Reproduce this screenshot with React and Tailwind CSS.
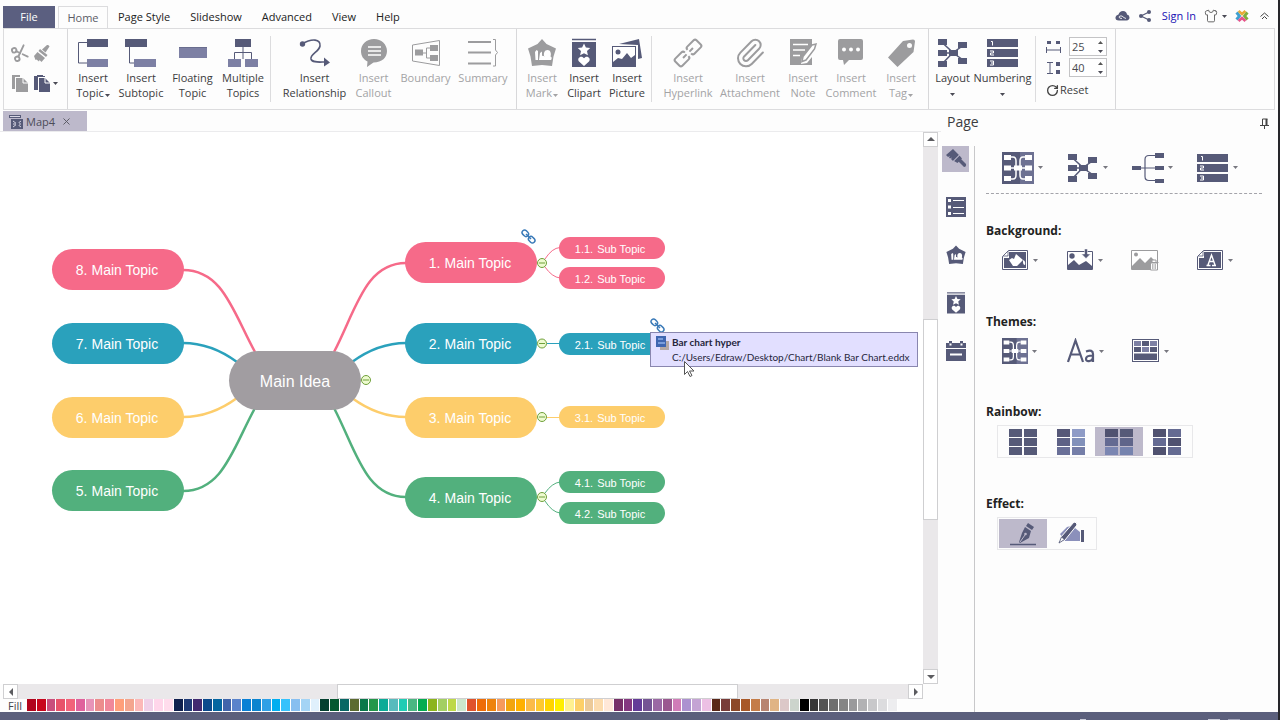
import React, { useState } from "react";
import { Scissors, Paperclip, RotateCw, Shirt, X } from "lucide-react";

const DARK = "#565a78";
const LIGHT = "#7d80a4";
const GRAY = "#9c9c9e";

const Icon = ({ w = 32, h = 32, children }) => (
  <svg width={w} height={h} viewBox={`0 0 ${w} ${h}`} fill="none" aria-hidden="true" className="shrink-0">
    {children}
  </svg>
);

const Caret = ({ color = "#4a4a55" }) => (
  <svg width="5" height="3" viewBox="0 0 5 3" aria-hidden="true" className="shrink-0">
    <path d="M0 0h5L2.5 3z" fill={color} />
  </svg>
);

/* ---------- ribbon icons ---------- */

const TopicIcon = () => (
  <Icon>
    <path d="M10 5.500H1.500V26H10" stroke={DARK} />
    <rect x="10" y="2" width="21" height="8" fill={DARK} />
    <rect x="10" y="22" width="21" height="8" fill={LIGHT} />
  </Icon>
);

const SubtopicIcon = () => (
  <Icon>
    <path d="M4.500 10V26H9" stroke={DARK} />
    <rect y="2" width="22" height="8" fill={DARK} />
    <rect x="9" y="22" width="22" height="8" fill={LIGHT} />
  </Icon>
);

const FloatingIcon = () => (
  <Icon>
    <rect x="2" y="10" width="28" height="11" fill={LIGHT} />
    <path d="M2 10.500h28" stroke={DARK} strokeOpacity=".5" />
  </Icon>
);

const MultipleIcon = () => (
  <Icon>
    <path d="M16 10v12M7.500 22v-6.500h17V22" stroke={DARK} />
    <rect x="8" y="2" width="16" height="8" fill={DARK} />
    <rect x="1" y="22" width="13" height="8" fill={LIGHT} />
    <rect x="18" y="22" width="13" height="8" fill={LIGHT} />
  </Icon>
);

const RelationshipIcon = () => (
  <Icon>
    <path d="M3 7C13 1 22 2 21 9c-1 6-10 8-9 13 1 4 8 3 15 3" stroke={DARK} strokeWidth="1.600" />
    <circle cx="3.500" cy="7" r="2.700" fill={DARK} />
    <path d="M25 20.500l6 5-6 4z" fill={DARK} />
  </Icon>
);

const CalloutIcon = () => (
  <Icon>
    <path d="M16 2C8.500 2 3 7 3 14c0 5 2.500 8.500 6.500 10.500L9 30l6.500-4.500C24 25.500 29 20.500 29 14S23.500 2 16 2z" fill={GRAY} />
    <path d="M10 10h13M10 14h13M10 18h13" stroke="#fff" strokeWidth="1.500" />
  </Icon>
);

const BoundaryIcon = () => (
  <Icon>
    <path d="M2.500 8L29.500 3.500v25L2.500 24z" stroke={GRAY} />
    <path d="M13 16h4M20 11h-3.500v10H20" stroke={GRAY} />
    <rect x="5" y="12.500" width="8" height="6" fill={GRAY} />
    <rect x="20" y="8" width="8" height="6" fill={GRAY} />
    <rect x="20" y="18" width="8" height="6" fill={GRAY} />
  </Icon>
);

const SummaryIcon = () => (
  <Icon>
    <path d="M1 5h23M1 15.500h23M1 26.500h23" stroke={GRAY} strokeWidth="2" />
    <path d="M26 2.500h2.500v10.500l2 2.500-2 2.500v11H26" stroke={GRAY} />
  </Icon>
);

const MarkIcon = ({ size = 32, color = GRAY }) => (
  <svg width={size} height={size} viewBox="0 0 32 32" aria-hidden="true">
    <path d="M16 2l4.500 5L30 11.500l-2.500 8L26 29l-10-1-10 1-1.500-9.500L2 11.500 11.500 7z" fill={color} />
    <path d="M9 15l1.500-2 1.500 1v9H9.500zM13 23l1-7 2-1.500v4.500c1-.5 2 0 2.500 1-1.500-3.500 0-7 3-7s4 3.500 3 6.500c1.500.5 1.500 2.500.5 3.500z" fill="#fff" />
  </svg>
);

const ClipartIcon = ({ w = 32, h = 32 }) => (
  <svg width={w} height={h} viewBox="0 0 32 32" aria-hidden="true">
    <path d="M4 2.500h24" stroke={DARK} strokeWidth="1.500" />
    <rect x="4" y="5" width="24" height="25" fill={DARK} />
    <path d="M16 6.500l1.900 4 4.300.500-3.200 3 .900 4.300L16 16.200l-3.900 2.100.900-4.300-3.200-3 4.300-.5z" fill="#fff" />
    <path d="M16 29l-5-4.500c-2-2.500.5-5.500 3.500-4.500l1.500 1.200 1.500-1.200c3-1 5.500 2 3.500 4.500z" fill="#fff" />
  </svg>
);

const PictureIcon = () => (
  <Icon>
    <path d="M8 7L28 2l3 19-4 1V8z" fill={DARK} />
    <rect x="1.500" y="9.500" width="23" height="20" fill="#fff" stroke={DARK} />
    <circle cx="7" cy="15" r="2.500" fill={DARK} />
    <path d="M2 25l5-4 4 1 5-6 4 5 4-3v11H2z" fill={DARK} />
  </Icon>
);

const HyperlinkIcon = () => (
  <Icon>
    <g transform="rotate(-45 16 16)" stroke={GRAY} strokeWidth="2">
      <path d="M14 13.500V13q0-2-2-2H3q-2 0-2 2v6q0 2 2 2h9q2 0 2-2v-.5" />
      <path d="M18 13.500V13q0-2 2-2h9q2 0 2 2v6q0 2-2 2h-9q-2 0-2-2v-.5" />
      <path d="M9 16h5M18 16h5" />
    </g>
  </Icon>
);

const NoteIcon = () => (
  <Icon>
    <path d="M3 2h22v8L15 21l-1 6 6-1 5-6v8H3z" fill={GRAY} />
    <path d="M6 7.500h15M6 13h12M6 18.500h7" stroke="#fff" strokeWidth="1.500" />
    <path d="M25 8l4-1-1.500 5L19 23l-4 1.500 1-5z" fill="#fff" stroke={GRAY} strokeWidth="1.500" />
  </Icon>
);

const CommentIcon = () => (
  <Icon>
    <path d="M5 2h21q2 0 2 2v17q0 2-2 2H14l-5 5-1-5H5q-2 0-2-2V4q0-2 2-2z" fill={GRAY} />
    <circle cx="9" cy="12.500" r="2" fill="#fff" />
    <circle cx="16" cy="12.500" r="2" fill="#fff" />
    <circle cx="23" cy="12.500" r="2" fill="#fff" />
  </Icon>
);

const TagIcon = () => (
  <Icon>
    <path fillRule="evenodd" d="M18 4l10-1.500q2 0 2 2L28.500 15 12.500 30 3 20.500zM24.500 6a2.500 2.500 0 100 5 2.500 2.500 0 000-5z" fill={GRAY} />
  </Icon>
);

const LayoutIcon = () => (
  <Icon>
    <path d="M5 5.500l11 10L27 8M5 16h11l11 7.500M16 15.500L5 27" stroke={DARK} strokeWidth="1.500" />
    <rect x="1" y="2" width="9" height="6" fill={DARK} />
    <rect x="1" y="13" width="9" height="6" fill={DARK} />
    <rect x="1" y="24" width="9" height="6" fill={DARK} />
    <rect x="12" y="13" width="9" height="6" fill={DARK} />
    <rect x="21" y="5" width="9" height="6" fill={DARK} />
    <rect x="21" y="21" width="9" height="6" fill={DARK} />
  </Icon>
);

const NumberingIcon = () => (
  <Icon>
    <rect y="2" width="31" height="8" fill={DARK} />
    <rect y="12" width="31" height="8" fill={DARK} />
    <rect y="22" width="31" height="8" fill={DARK} />
    <path d="M4 4.500h1.500v4" stroke="#fff" />
    <path d="M3 14h3.500v2H3.500v2H7" stroke="#fff" />
    <path d="M3 24h3.500v4H3M4 26h2" stroke="#fff" />
  </Icon>
);

const BrushIcon = () => (
  <Icon w={18} h={18}>
    <path d="M14 1q2-.5 2.500 1.500L12.500 8.500 9 5.500z" fill={GRAY} />
    <path d="M7 5l7.500 6-1.500 2-7.500-6z" fill={GRAY} />
    <path d="M4.500 8l7.500 6-3.500 4-2-2-.5 1.500-2.500-2-1 .500L1 12z" fill={GRAY} />
  </Icon>
);

const CopyIcon = () => (
  <Icon w={18} h={18}>
    <path d="M1 1h8v2H4v12H1z" fill={GRAY} />
    <path d="M5 4h7l5 5v9H5z" fill={GRAY} />
    <path d="M12 4v5h5" stroke="#fff" />
  </Icon>
);

const PasteIcon = () => (
  <Icon w={18} h={18}>
    <path d="M1 2h3V1h6v1h2v1H5v13H1z" fill={DARK} />
    <path d="M6 4h6l5 5v9H6z" fill={DARK} />
    <path d="M12 4v5h5M5.500 4v13" stroke="#fff" />
  </Icon>
);

/* ---------- page panel icons ---------- */

const MapIcon = ({ size = 32 }) => (
  <svg width={size} height={size} viewBox="0 0 32 32" fill="none" aria-hidden="true" className="shrink-0">
    <rect width="32" height="32" fill={DARK} />
    <path d="M32 0v32H18V0z" fill={LIGHT} fillOpacity=".6" />
    <path d="M9 5h2q3 0 3 4v14q0 4-3 4H9M23 5h-2q-3 0-3 4v14q0 4 3 4h2M9 16h14" stroke="#fff" strokeWidth="1.500" />
    <path d="M2 3h7v5H2zM2 13.500h7v5H2zM2 24h7v5H2zM23 3h7v5h-7zM23 13.500h7v5h-7zM23 24h7v5h-7zM12 13.500h8v5h-8z" fill="#fff" />
  </svg>
);

const TreeIcon = () => (
  <Icon>
    <path d="M8 16h16M24 3.500h-7q-4 0-4 4v17q0 4 4 4h7" stroke={DARK} strokeWidth="1.200" />
    <path d="M0 14h9v4H0zM23 1h9v5h-9zM23 14h9v4h-9zM23 27h9v4h-9z" fill={DARK} />
  </Icon>
);

const BackFillIcon = () => (
  <Icon w={28} h={22}>
    <path d="M7.500 1.500h19v19h-25v-13z" fill="#fff" stroke={DARK} />
    <path d="M8 3h17v16H3V9h5z" fill={DARK} />
    <path d="M2 7l5-5v5z" fill="#fff" stroke={DARK} strokeWidth=".800" />
    <path d="M15 5l7 6-6 6h-4l-4-6 3-2 2 1z" fill="#fff" />
    <path d="M22 11q3 1 2 5-2 0-2-3z" fill="#fff" />
  </Icon>
);

const BackPictureIcon = () => (
  <Icon w={28} h={22}>
    <path d="M1.500 2.500h25v18h-25z" fill="#fff" stroke={DARK} />
    <circle cx="6" cy="7" r="2.700" fill={DARK} />
    <path d="M2 16l6-5 5 5 7-4 6 5v3H2z" fill={DARK} />
    <path d="M18.500 0h3v5h3L20 9.500 15.500 5h3z" fill={DARK} stroke="#fff" strokeWidth=".500" />
  </Icon>
);

const BackRemoveIcon = () => (
  <Icon w={28} h={22}>
    <path d="M.500 1.500h26v19H.500z" fill="#fff" stroke={GRAY} />
    <circle cx="5" cy="5.500" r="2" fill={GRAY} />
    <path d="M1 17l8-8 5 5 6-6 6 6v6H1z" fill={GRAY} />
    <path d="M18.500 13.500h9M21 13v-2h4v2M19.500 14v7h7v-7z" fill="#fff" stroke={GRAY} />
    <path d="M21.500 15v5M23 15v5M24.500 15v5" stroke={GRAY} strokeWidth=".700" />
  </Icon>
);

const WatermarkIcon = () => (
  <Icon w={28} h={22}>
    <path d="M7.500 1.500h19v19h-25v-13z" fill="#fff" stroke={DARK} />
    <path d="M8 3h17v16H3V9h5z" fill={DARK} />
    <path d="M2 7l5-5v5z" fill="#fff" stroke={DARK} strokeWidth=".800" />
    <path d="M10.500 16.500h4M16 16.500h4M12 16l3.500-10L19 16M13.500 12.500h4" stroke="#fff" strokeWidth="1.400" />
  </Icon>
);

const FontIcon = () => (
  <Icon w={28} h={26}>
    <path d="M1 24L8.500 2.500 16 24M4 16.500h9" stroke={DARK} strokeWidth="2.200" />
    <path d="M19 13.500q7-2.500 7 2.500v8M26 17.500q-7 0-7 3.300 0 2.700 3 2.300 4-.5 4-4.600" stroke={DARK} strokeWidth="2.200" />
  </Icon>
);

const ThemeColorIcon = () => (
  <Icon w={28} h={26}>
    <rect x=".500" y="1.500" width="26" height="22" fill="#fff" stroke={DARK} />
    <path d="M2 3h7v5H2zM18 3h7v5h-7zM10 9h7v5h-7z" fill={LIGHT} />
    <path d="M10 3h7v5h-7zM2 9h7v5H2zM18 9h7v5h-7zM2 15.500h23V22H2z" fill={DARK} />
  </Icon>
);

const BlocksIcon = ({ fills }) => (
  <Icon w={30} h={28}>
    {fills.map((fill, i) => (
      <rect key={i} x={i % 2 ? 16 : 1} y={1 + Math.floor(i / 2) * 9} width="13" height="8" fill={fill} />
    ))}
  </Icon>
);

const PenIcon = () => (
  <Icon w={30} h={26}>
    <path d="M2 23.500h26" stroke={DARK} strokeWidth="1.500" />
    <path d="M20 2l6 4-2 3-6-4zM17 6l6 4-2 7-9 5-1-1 3-9z" fill={DARK} />
    <path d="M12 21l5-7" stroke="#bdb9cb" />
    <circle cx="17.500" cy="13" r="1.300" fill="#bdb9cb" />
  </Icon>
);

const HandPenIcon = () => (
  <Icon w={30} h={26}>
    <path d="M4 13L11 6q5-2 8 1l5 4v9H9z" fill="#8b90bb" />
    <path d="M25 9h3v12h-3z" fill={DARK} />
    <path d="M18 1q3 0 3 3L9 19l-7 4 3-7z" fill={DARK} stroke="#fff" />
    <path d="M5.500 16l3 2.500-5.500 3.500z" fill="#fff" stroke={DARK} strokeWidth=".800" />
  </Icon>
);

const PaintIcon = () => (
  <Icon w={22} h={22}>
    <path d="M8 1l6 6-6 6-2-2 1-1.500L5 10.500 4 9.500 5 8 3 9 1 7z" fill={DARK} />
    <path d="M14.500 7.500l2.500 3-4.500 4.500-3.500-2z" fill={DARK} />
    <path d="M15 10l6 6q.5 3-2 3l-6-6z" fill={DARK} />
    <path d="M14.500 7L8.500 13" stroke="#bdb9cb" strokeWidth=".800" />
  </Icon>
);

const ListIcon = () => (
  <Icon w={20} h={20}>
    <rect width="20" height="20" fill={DARK} />
    <path d="M2 2h3v3H2zM2 8.500h3v3H2zM2 15h3v3H2z" fill="#fff" />
    <path d="M7 3.500h11M7 10.500h11M7 16.500h11" stroke="#fff" />
  </Icon>
);

const CalendarIcon = () => (
  <Icon w={20} h={22}>
    <path d="M0 3h3V1h3v2h8V1h3v2h3v5H0zM0 9h20v12H0z" fill={DARK} />
    <path d="M3.500 4.500h2M14.500 4.500h2M4 14.500h12" stroke="#fff" strokeWidth="2" />
  </Icon>
);

/* ---------- ribbon ---------- */

function RibbonButton({ width, icon, lines, disabled, caret, caretBelow }) {
  return (
    <button
      type="button"
      disabled={disabled}
      className={`flex shrink-0 flex-col items-center pt-2 text-[11px] leading-[15px] ${width} ${
        disabled ? "text-[#a3a3a5]" : "text-[#3c3c40]"
      }`}
    >
      {icon}
      <span className="mt-px whitespace-nowrap">{lines[0]}</span>
      {lines[1] && (
        <span className="flex items-center gap-px whitespace-nowrap">
          {lines[1]}
          {caret && <span className="pt-1.5"><Caret color={disabled ? "#a3a3a5" : "#4a4a55"} /></span>}
        </span>
      )}
      {caretBelow && <span className="pt-2"><Caret /></span>}
    </button>
  );
}

const ShortRule = () => <div className="my-[7px] w-px shrink-0 bg-[#dcdcde]" />;
const LongRule = () => <div className="w-px shrink-0 bg-[#d8d8da]" />;

function Spinner({ label, icon, initial }) {
  const [value, setValue] = useState(initial);
  return (
    <label className="flex items-center gap-2">
      {icon}
      <span className="flex h-[19px] w-[38px] items-center border border-[#c4c4c6] bg-white">
        <input
          aria-label={label}
          value={value}
          onChange={(e) => setValue(Number(e.target.value) || 0)}
          className="w-6 min-w-0 pl-0.5 text-[11px] leading-4 text-[#4a4a50] outline-none"
        />
        <span className="flex flex-1 flex-col items-center gap-1.5">
          <button type="button" aria-label={`Increase ${label}`} onClick={() => setValue(value + 1)}>
            <svg width="5" height="3" viewBox="0 0 5 3"><path d="M0 3h5L2.500 0z" fill="#555" /></svg>
          </button>
          <button type="button" aria-label={`Decrease ${label}`} onClick={() => setValue(value - 1)}>
            <Caret />
          </button>
        </span>
      </span>
    </label>
  );
}

function Ribbon() {
  return (
    <div className="mr-[3px] ml-[3px] flex h-[82px] shrink-0 overflow-hidden border border-[#dcdcde]">
      <div className="grid w-[63px] shrink-0 grid-cols-[26px_30px] content-start gap-y-3 pt-[15px] pl-[7px]">
        <button type="button" aria-label="Cut"><Scissors size={18} color={GRAY} strokeWidth={2.500} className="-rotate-20" /></button>
        <button type="button" aria-label="Format painter" className="-ml-1"><BrushIcon /></button>
        <button type="button" aria-label="Copy"><CopyIcon /></button>
        <button type="button" aria-label="Paste" className="-ml-1 flex items-center gap-0.5"><PasteIcon /><Caret /></button>
      </div>
      <LongRule />
      <div className="flex shrink-0 pr-1 pl-px">
        <RibbonButton width="w-[48px]" icon={<TopicIcon />} lines={["Insert", "Topic"]} caret />
        <RibbonButton width="w-[48px]" icon={<SubtopicIcon />} lines={["Insert", "Subtopic"]} />
        <RibbonButton width="w-[55px]" icon={<FloatingIcon />} lines={["Floating", "Topic"]} />
        <RibbonButton width="w-[46px]" icon={<MultipleIcon />} lines={["Multiple", "Topics"]} />
      </div>
      <ShortRule />
      <div className="flex shrink-0 pr-1 pl-2">
        <RibbonButton width="w-[71px]" icon={<RelationshipIcon />} lines={["Insert", "Relationship"]} />
        <RibbonButton width="w-[47px]" icon={<CalloutIcon />} lines={["Insert", "Callout"]} disabled />
        <RibbonButton width="w-[57px]" icon={<BoundaryIcon />} lines={["Boundary"]} disabled />
        <RibbonButton width="w-[58px]" icon={<SummaryIcon />} lines={["Summary"]} disabled />
      </div>
      <LongRule />
      <div className="flex shrink-0 pr-px pl-[3px]">
        <RibbonButton width="w-[44px]" icon={<MarkIcon />} lines={["Insert", "Mark"]} disabled caret />
        <RibbonButton width="w-[40px]" icon={<ClipartIcon />} lines={["Insert", "Clipart"]} />
        <RibbonButton width="w-[46px]" icon={<PictureIcon />} lines={["Insert", "Picture"]} />
      </div>
      <ShortRule />
      <div className="flex shrink-0 pr-1 pl-1.5">
        <RibbonButton width="w-[60px]" icon={<HyperlinkIcon />} lines={["Insert", "Hyperlink"]} disabled />
        <RibbonButton
          width="w-[64px]"
          icon={<Paperclip size={32} color={GRAY} strokeWidth={1.500} />}
          lines={["Insert", "Attachment"]}
          disabled
        />
        <RibbonButton width="w-[42px]" icon={<NoteIcon />} lines={["Insert", "Note"]} disabled />
        <RibbonButton width="w-[54px]" icon={<CommentIcon />} lines={["Insert", "Comment"]} disabled />
        <RibbonButton width="w-[46px]" icon={<TagIcon />} lines={["Insert", "Tag"]} disabled caret />
      </div>
      <LongRule />
      <div className="flex shrink-0 pr-1 pl-0.5">
        <RibbonButton width="w-[43px]" icon={<LayoutIcon />} lines={["Layout"]} caretBelow />
        <RibbonButton width="w-[57px]" icon={<NumberingIcon />} lines={["Numbering"]} caretBelow />
      </div>
      <ShortRule />
      <div className="flex shrink-0 flex-col items-start gap-0.5 pt-2 pr-2 pl-2.5">
        <Spinner
          label="Horizontal spacing"
          initial={25}
          icon={
            <Icon w={15} h={14}>
              <path d="M1 1h4v3H1zM10 1h4v3h-4z" fill={DARK} />
              <path d="M.500 7v6M14.500 7v6M1 10h13" stroke={DARK} />
            </Icon>
          }
        />
        <Spinner
          label="Vertical spacing"
          initial={40}
          icon={
            <Icon w={15} h={14}>
              <path d="M1 1.500h6M1 12.500h6M4 2v10" stroke={DARK} />
              <path d="M10 1h4v4h-4zM10 9h4v4h-4z" fill={DARK} />
            </Icon>
          }
        />
        <button type="button" className="flex items-center gap-px pt-0.5 text-[11px] leading-[18px] text-[#3c3c40]">
          <RotateCw size={13} strokeWidth={2.500} color="#444" />
          Reset
        </button>
      </div>
      <LongRule />
    </div>
  );
}

function MenuBar() {
  return (
    <div className="flex h-[28px] shrink-0 items-end pr-[9px] pl-[3px] text-[11px] leading-4 text-[#222]">
      <button type="button" className="h-[22px] w-[52px] bg-[#5b5f80] text-white">File</button>
      <button type="button" className="ml-[3px] h-[22px] w-[50px] border border-b-0 border-[#dcdcde] text-[#5b5b66]">
        Home
      </button>
      <div className="flex h-[22px] items-center gap-5 pl-[10px]">
        {["Page Style", "Slideshow", "Advanced", "View", "Help"].map((name) => (
          <button key={name} type="button">{name}</button>
        ))}
      </div>
      <div className="ml-auto flex h-[24px] items-center">
        <button type="button" aria-label="Cloud">
          <Icon w={15} h={12}>
            <path d="M4 10.500Q0 10.500.500 7q.5-2 3-2.500Q4.500 1 8 1q3.500 0 4 3.500 2.500.5 2.500 3t-3 3z" fill={DARK} />
            <path d="M7 8.500q-3 0-3-1.500t3-1q2 2 4 2.500" stroke="#e4e4ea" />
          </Icon>
        </button>
        <button type="button" aria-label="Share" className="ml-[9px]">
          <Icon w={12} h={12}>
            <path d="M10 2L2 6l8 4" stroke={DARK} strokeWidth="1.200" />
            <circle cx="10" cy="2" r="2" fill={DARK} />
            <circle cx="2" cy="6" r="2" fill={DARK} />
            <circle cx="10" cy="10" r="2" fill={DARK} />
          </Icon>
        </button>
        <a href="#sign-in" className="ml-[11px] text-[#1a12b4]">Sign In</a>
        <button type="button" aria-label="Skin" className="ml-2 flex items-center gap-1">
          <Shirt size={14} strokeWidth={1.500} color="#555" />
          <Caret />
        </button>
        <button type="button" aria-label="Apps" className="ml-2">
          <Icon w={14} h={14}>
            <path d="M3.500 2L7 5l3.500-3" stroke="#e8ac38" strokeWidth="2.800" />
            <path d="M1.500 3.500L4.500 7l-3 3.500" stroke="#3f9fd0" strokeWidth="2.800" />
            <path d="M12.500 3.500L9.500 7l3 3.500" stroke="#7fae3c" strokeWidth="2.800" />
            <path d="M3.500 12L7 9l3.500 3" stroke="#e6558c" strokeWidth="2.800" />
          </Icon>
        </button>
        <button type="button" aria-label="Collapse ribbon" className="ml-[11px]">
          <Icon w={9} h={8}>
            <path d="M.500 4.500l4-3.500 4 3.500M2 7l2.500-2.500L7 7" stroke="#444" />
          </Icon>
        </button>
      </div>
    </div>
  );
}

/* ---------- mind map ---------- */

const PINK = "#f66a89";
const TEAL = "#2aa1bc";
const AMBER = "#fdcd6b";
const GREEN = "#52b07d";

// coordinates are on the drawing canvas
const mainTopics = [
  { n: "8.", x: 52, y: 117, color: PINK },
  { n: "7.", x: 52, y: 191, color: TEAL },
  { n: "6.", x: 52, y: 265, color: AMBER },
  { n: "5.", x: 52, y: 338, color: GREEN },
  { n: "1.", x: 405, y: 110, color: PINK },
  { n: "2.", x: 405, y: 191, color: TEAL },
  { n: "3.", x: 405, y: 265, color: AMBER },
  { n: "4.", x: 405, y: 345, color: GREEN },
];

const subTopics = [
  { n: "1.1.", y: 105, color: PINK },
  { n: "1.2.", y: 135, color: PINK },
  { n: "2.1.", y: 201, color: TEAL },
  { n: "3.1.", y: 274, color: AMBER },
  { n: "4.1.", y: 339, color: GREEN },
  { n: "4.2.", y: 370, color: GREEN },
];

const branches = [
  { d: "M334 220C356 178 365 131 406 131", color: PINK },
  { d: "M255 220C233 180 223 138 183 138", color: PINK },
  { d: "M352 230Q378 211 406 211", color: TEAL },
  { d: "M237 230Q211 211 183 211", color: TEAL },
  { d: "M352 266Q378 285 406 285", color: AMBER },
  { d: "M237 266Q211 285 183 285", color: AMBER },
  { d: "M334 276C356 318 365 365 406 365", color: GREEN },
  { d: "M255 276C233 316 223 359 183 359", color: GREEN },
];

const twigs = [
  { d: "M545 127Q552 116 560 115.500M545 135Q552 145 560 146", color: PINK },
  { d: "M547 211.500H560", color: TEAL },
  { d: "M547 285.500H560", color: AMBER },
  { d: "M545 361Q552 351 560 350M545 369Q552 380 560 381", color: GREEN },
];

const toggles = [
  [542, 131],
  [542, 211.5],
  [542, 285],
  [542, 365],
  [366, 248],
];

const LinkBadge = ({ x, y }) => (
  <a href="#link" aria-label="Hyperlink" className="absolute" style={{ left: x, top: y }}>
    <Icon w={15} h={15}>
      <g transform="rotate(45 7.500 7.500)" stroke="#3a7ab8" strokeWidth="1.500">
        <rect x="-.500" y="5" width="7" height="5" rx="2.500" />
        <rect x="8.500" y="5" width="7" height="5" rx="2.500" />
        <path d="M4 7.500h7" />
      </g>
    </Icon>
  </a>
);

function MindMap() {
  return (
    <div className="relative min-w-0 flex-1 overflow-hidden bg-white [font-family:'Liberation_Sans',Arial,sans-serif] text-white">
      <svg className="absolute inset-0 h-full w-full" fill="none" aria-hidden="true">
        {branches.map((b) => (
          <path key={b.d} d={b.d} stroke={b.color} strokeWidth="2.500" />
        ))}
        {twigs.map((t) => (
          <path key={t.d} d={t.d} stroke={t.color} />
        ))}
        {toggles.map(([x, y]) => (
          <g key={`${x}-${y}`} stroke="#6fa03a">
            <circle cx={x} cy={y} r="4.500" fill="#eefbd0" />
            <path d={`M${x - 3} ${y}h6`} />
          </g>
        ))}
      </svg>

      <div className="absolute top-[219px] left-[229px] flex h-[59px] w-[132px] items-center justify-center rounded-full bg-[#a19da1] pt-0.5 text-[16px]">
        Main Idea
      </div>
      {mainTopics.map((t) => (
        <div
          key={t.n}
          className="absolute flex h-[41px] w-[132px] items-center justify-center gap-1 rounded-full pt-px pr-0.5 text-[14px] leading-5"
          style={{ left: t.x, top: t.y, backgroundColor: t.color }}
        >
          <span>{t.n}</span>
          <span>Main Topic</span>
        </div>
      ))}
      {subTopics.map((t) => (
        <div
          key={t.n}
          className="absolute left-[559px] flex h-[22px] w-[106px] items-center justify-center gap-1 rounded-full pt-px pr-1 text-[11px] leading-4"
          style={{ top: t.y, backgroundColor: t.color }}
        >
          <span>{t.n}</span>
          <span>Sub Topic</span>
        </div>
      ))}

      <LinkBadge x={521} y={97} />
      <LinkBadge x={650} y={186} />

      <div
        role="tooltip"
        className="absolute top-[200px] left-[650px] flex h-[35px] w-[268px] gap-0.5 border border-[#8986ae] bg-[#e2dfff] pt-0.5 pl-1 [font-family:Lato,sans-serif] text-[10px] leading-[15px] text-[#26263c]"
      >
        <div className="pt-px">
          <Icon w={15} h={15}>
            <path d="M5 5h9v9H5z" fill="#b5a9a4" />
            <path d="M1 0h10v11H1z" fill="#3f66b0" />
            <path d="M3 3h5M3 7h7" stroke="#8fb0e8" strokeWidth="1.500" />
          </Icon>
        </div>
        <div className="whitespace-nowrap">
          <p className="font-bold">Bar chart hyper</p>
          <p>C:/Users/Edraw/Desktop/Chart/Blank Bar Chart.eddx</p>
        </div>
      </div>

      {/* mouse pointer */}
      <svg width="11" height="17" viewBox="0 0 11 17" className="absolute top-[229px] left-[684px]" aria-hidden="true">
        <path d="M.500.500v13l3-3 2.500 5 2-1-2.500-4.500H10z" fill="#fff" stroke="#555" />
      </svg>
    </div>
  );
}

const arrows = {
  up: "M1 6h8L5 2z",
  down: "M1 3h8L5 7z",
  left: "M7 1v8L3 5z",
  right: "M3 1v8l4-4z",
};

const ScrollButton = ({ dir }) => (
  <button
    type="button"
    aria-label={`Scroll ${dir}`}
    className="flex size-[15px] shrink-0 items-center justify-center border border-[#cfcfd1] bg-white"
  >
    <svg width="10" height="10" viewBox="0 0 10 10"><path d={arrows[dir]} fill="#5c5c60" /></svg>
  </button>
);

/* ---------- colour strip ---------- */

const swatches = [
  "bg-[#b1051d]", "bg-[#c8071d]", "bg-[#c94f7c]", "bg-[#e8536a]", "bg-[#f2637a]", "bg-[#e0629c]", "bg-[#e794b8]", "bg-[#ec8d8d]",
  "bg-[#f0889a]", "bg-[#ff9f7a]", "bg-[#f4a58e]", "bg-[#fcb8b8]", "bg-[#f0d0e8]", "bg-[#ffd6ea]", "bg-[#ffdcec]",
  "bg-[#10204d]", "bg-[#1f3a75]", "bg-[#422a70]", "bg-[#0b4a8c]", "bg-[#0466a0]", "bg-[#4165ab]", "bg-[#5a83cb]", "bg-[#0a80d5]",
  "bg-[#0c84cf]", "bg-[#2fa0e6]", "bg-[#00aef0]", "bg-[#35c2fc]", "bg-[#87bff0]", "bg-[#a4d4f5]", "bg-[#e0f0fc]",
  "bg-[#044030]", "bg-[#04582f]", "bg-[#086764]", "bg-[#5b6b30]", "bg-[#08784a]", "bg-[#23974a]", "bg-[#0bab97]", "bg-[#58bbbd]",
  "bg-[#20ccb4]", "bg-[#4ab782]", "bg-[#04ac50]", "bg-[#8cb41c]", "bg-[#a3cf62]", "bg-[#bdd848]", "bg-[#cce6cc]",
  "bg-[#e0522c]", "bg-[#ee6c08]", "bg-[#ee820c]", "bg-[#f69a5c]", "bg-[#f2a50e]", "bg-[#ffb000]", "bg-[#fbbb48]", "bg-[#fdc830]",
  "bg-[#ffd400]", "bg-[#ffee00]", "bg-[#fff090]", "bg-[#fdd068]", "bg-[#ecca98]", "bg-[#fcdcae]", "bg-[#ffe8d8]",
  "bg-[#763068]", "bg-[#843880]", "bg-[#643c98]", "bg-[#745494]", "bg-[#9a68a4]", "bg-[#9a5890]", "bg-[#d07cb8]", "bg-[#ac92d0]",
  "bg-[#c4a4d4]", "bg-[#ecc0e4]",
  "bg-[#5a2818]", "bg-[#783c38]", "bg-[#8c4828]", "bg-[#a85828]", "bg-[#c47c48]", "bg-[#b88470]", "bg-[#e0b484]", "bg-[#dcc8c8]",
  "bg-[#ccd4cc]",
  "bg-[#000000]", "bg-[#363636]", "bg-[#545454]", "bg-[#6e6e6e]", "bg-[#858585]", "bg-[#9a9a9c]", "bg-[#b2b2b4]", "bg-[#c8c8ca]",
  "bg-[#dcdcde]", "bg-[#ededef]",
];

/* ---------- page panel ---------- */

const WithCaret = ({ label, children, caret = true }) => (
  <button type="button" aria-label={label} className="flex w-[65px] shrink-0 items-center gap-1">
    {children}
    {caret && <Caret color="#77777f" />}
  </button>
);

const rainbows = [
  [DARK, DARK, DARK, DARK, DARK, DARK],
  ["#565878", "#8e9bc6", "#5e6286", "#8291ba", "#6a7098", "#757ea8"],
  ["#505270", "#565a78", "#646a92", "#5f658a", "#7b86b2", "#7683ae"],
  ["#505270", "#656b92", "#646a92", "#505270", "#505270", "#656b92"],
];

function PagePanel() {
  const [rainbow, setRainbow] = useState(2);
  const [effect, setEffect] = useState(0);

  return (
    <aside className="flex w-[337px] shrink-0 flex-col">
      <div className="flex h-[36px] shrink-0 items-start justify-between pr-[9px] pl-[6px]">
        <h2 className="pt-0.5 text-[14px] leading-5 text-[#3c3c40]">Page</h2>
        <button type="button" aria-label="Pin panel" className="pt-2">
          <Icon w={9} h={11}>
            <path d="M2.500 1h5M2.500 1v6M6.500 1v6M0 7.500h9M4.500 8v3" stroke="#444" />
            <path d="M5.500 1h2v6h-2z" fill="#444" />
          </Icon>
        </button>
      </div>
      <div className="flex min-h-0 flex-1">
        <nav className="flex w-[34px] shrink-0 flex-col gap-[22px] border-r border-[#c8c8ca] pl-px">
          {[
            ["Style", <PaintIcon key="i" />],
            ["Outline", <ListIcon key="i" />],
            ["Marks", <MarkIcon key="i" size={22} color={DARK} />],
            ["Clipart", <ClipartIcon key="i" w={24} h={24} />],
            ["Task", <CalendarIcon key="i" />],
          ].map(([label, icon], i) => (
            <button
              key={label}
              type="button"
              aria-label={label}
              className={`flex h-[26px] w-[27px] items-center justify-center ${i === 0 ? "bg-[#bdb9cb]" : ""}`}
            >
              {icon}
            </button>
          ))}
        </nav>
        <div className="flex-1 pr-[18px] pl-[11px] text-[#222]">
          <div className="flex h-[48px] items-center border-b border-dashed border-[#a4a4aa] pb-1 pl-4">
            <WithCaret label="Map template"><MapIcon /></WithCaret>
            <WithCaret label="Layout"><LayoutIcon /></WithCaret>
            <WithCaret label="Connector"><TreeIcon /></WithCaret>
            <WithCaret label="Numbering"><NumberingIcon /></WithCaret>
          </div>

          <h3 className="mt-7 text-[12px] leading-[18px] font-bold">Background:</h3>
          <div className="mt-2 flex h-[24px] items-center pl-[15px]">
            <WithCaret label="Background color"><BackFillIcon /></WithCaret>
            <WithCaret label="Background picture"><BackPictureIcon /></WithCaret>
            <WithCaret label="Remove background" caret={false}><BackRemoveIcon /></WithCaret>
            <WithCaret label="Watermark"><WatermarkIcon /></WithCaret>
          </div>

          <h3 className="mt-[41px] text-[12px] leading-[18px] font-bold">Themes:</h3>
          <div className="mt-[7px] flex h-[26px] items-center pl-4">
            <WithCaret label="Theme"><MapIcon size={26} /></WithCaret>
            <WithCaret label="Theme font"><FontIcon /></WithCaret>
            <WithCaret label="Theme color"><ThemeColorIcon /></WithCaret>
          </div>

          <h3 className="mt-[39px] text-[12px] leading-[18px] font-bold">Rainbow:</h3>
          <div className="mt-1 ml-[11px] flex h-[33px] w-fit border border-[#e8e8ea] p-px">
            {rainbows.map((fills, i) => (
              <button
                key={i}
                type="button"
                aria-label={`Rainbow ${i + 1}`}
                onClick={() => setRainbow(i)}
                className={`flex w-12 items-center justify-center ${i === rainbow ? "bg-[#bdb9cb]" : ""}`}
              >
                <BlocksIcon fills={fills} />
              </button>
            ))}
          </div>

          <h3 className="mt-[37px] text-[12px] leading-[18px] font-bold">Effect:</h3>
          <div className="mt-1 ml-[11px] flex h-[33px] w-fit border border-[#e8e8ea] p-px">
            {[<PenIcon key="pen" />, <HandPenIcon key="hand" />].map((icon, i) => (
              <button
                key={i}
                type="button"
                aria-label={i ? "Hand drawn" : "Normal"}
                onClick={() => setEffect(i)}
                className={`flex w-12 items-center justify-center ${i === effect ? "bg-[#bdb9cb]" : ""}`}
              >
                {icon}
              </button>
            ))}
          </div>
        </div>
      </div>
    </aside>
  );
}

export default function App() {
  return (
    <div className="flex h-screen flex-col overflow-hidden border-r-2 border-[#26262a] bg-[#fdfdfd] [font-family:'Open_Sans','Noto_Sans',sans-serif]">
      <MenuBar />
      <Ribbon />
      <div className="flex min-h-0 flex-1">
        <div className="flex min-w-0 flex-1 flex-col">
          <div className="flex h-[21px] shrink-0 items-end pl-[3px]">
            <div className="flex h-5 w-[84px] items-center gap-0.5 bg-[#bdb9cb] pt-px pl-1.5 text-[11px] leading-4 text-[#4c4c58]">
              <Icon w={15} h={15}>
                <path d="M0 1h12v3H0zM2 5h12v10H2z" fill={DARK} />
                <path d="M4 7l8 6M12 7l-8 6M4 10h8M1 2.500h10" stroke="#d8d6e4" />
                <path d="M7 8.500h3v3H7z" fill={DARK} />
              </Icon>
              <span>Map4</span>
              <button type="button" aria-label="Close Map4" className="ml-1"><X size={11} strokeWidth={2} color="#55555f" /></button>
            </div>
          </div>
          <div className="flex min-h-0 flex-1 border-t border-[#ebebed]">
            <MindMap />
            <div className="mr-[3px] flex w-[15px] shrink-0 flex-col bg-[#eae8ea]">
              <ScrollButton dir="up" />
              <div className="mt-[172px] h-[201px] border border-[#cfcfd1] bg-white" />
              <div className="mt-auto"><ScrollButton dir="down" /></div>
            </div>
          </div>
          <div className="mr-[18px] ml-[3px] flex h-[15px] shrink-0 bg-[#eae8ea]">
            <ScrollButton dir="left" />
            <div className="ml-[319px] w-[401px] border border-[#cfcfd1] bg-white" />
            <div className="ml-auto"><ScrollButton dir="right" /></div>
          </div>
          <div className="flex h-[13px] shrink-0 pl-2">
            <span className="w-[19px] text-[11px] leading-[14px] text-[#44444c]">Fill</span>
            <div className="flex h-3 w-[870px]">
              {swatches.map((bg, i) => (
                <button key={i} type="button" aria-label={`Fill ${i + 1}`} className={`flex-1 border-r border-white ${bg}`} />
              ))}
            </div>
          </div>
        </div>
        <PagePanel />
      </div>
      <footer className="flex h-2 shrink-0 items-end justify-end gap-2 bg-[#5b5f7c] pr-[38px]">
        <span className="mr-[114px] h-px w-1.5 bg-[#c8cad8]" />
        <span className="h-px w-3 bg-[#c8cad8]" />
        <span className="h-px w-3 bg-[#a0a2b8]" />
      </footer>
    </div>
  );
}
